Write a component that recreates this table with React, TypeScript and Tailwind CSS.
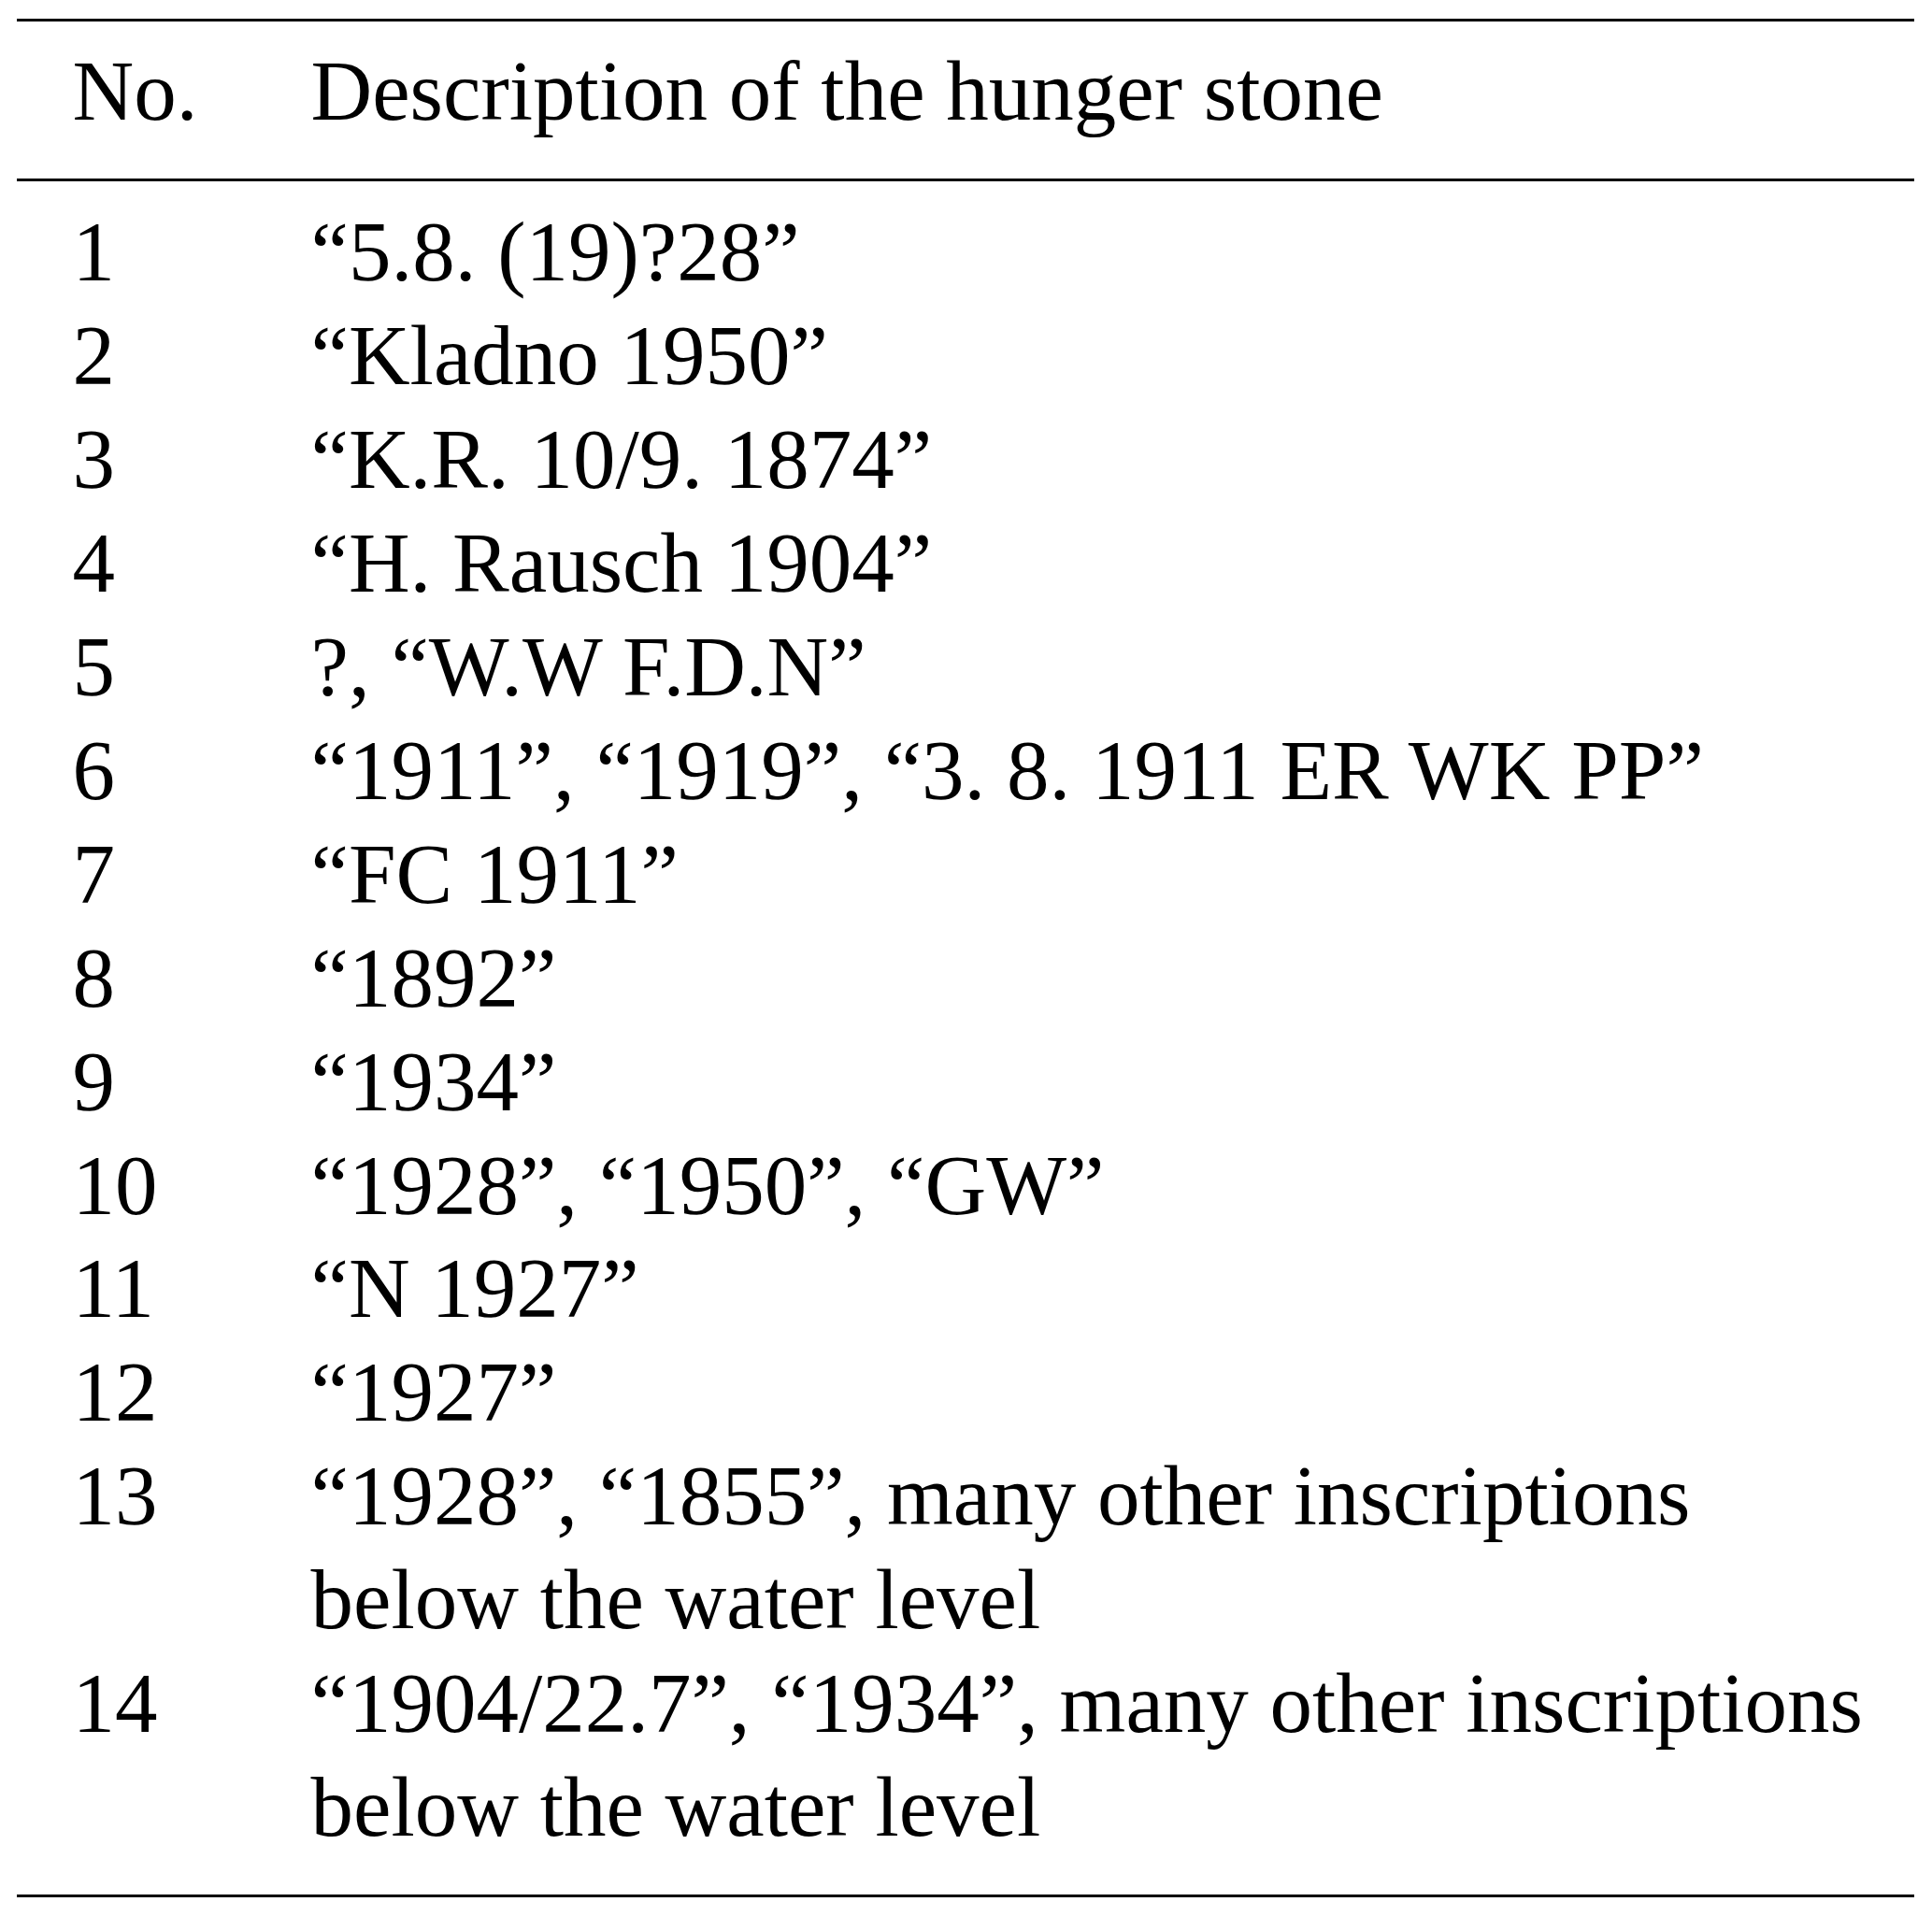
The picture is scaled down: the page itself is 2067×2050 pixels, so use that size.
const rows: { no: string; lines: string[] }[] = [
  { no: '1', lines: ['“5.8. (19)?28”'] },
  { no: '2', lines: ['“Kladno 1950”'] },
  { no: '3', lines: ['“K.R. 10/9. 1874”'] },
  { no: '4', lines: ['“H. Rausch 1904”'] },
  { no: '5', lines: ['?, “W.W F.D.N”'] },
  { no: '6', lines: ['“1911”, “1919”, “3. 8. 1911 ER WK PP”'] },
  { no: '7', lines: ['“FC 1911”'] },
  { no: '8', lines: ['“1892”'] },
  { no: '9', lines: ['“1934”'] },
  { no: '10', lines: ['“1928”, “1950”, “GW”'] },
  { no: '11', lines: ['“N 1927”'] },
  { no: '12', lines: ['“1927”'] },
  { no: '13', lines: ['“1928”, “1855”, many other inscriptions', 'below the water level'] },
  { no: '14', lines: ['“1904/22.7”, “1934”, many other inscriptions', 'below the water level'] },
];

function Rule({ className = '' }: { className?: string }) {
  return <div className={`h-[3px] bg-black ${className}`} />;
}

export default function App() {
  return (
    <div
      className="min-h-[2050px] w-[2067px] bg-white pl-[18px] pt-[20px] text-black"
      style={{ fontFamily: '"Liberation Serif", "Times New Roman", serif' }}
    >
      <div className="w-[2030px] text-[91px] leading-[110.9px]">
        <Rule />

        {/* Header */}
        <div className="mt-[20px] grid grid-cols-[255px_1fr] pl-[59.5px]">
          <div>No.</div>
          <div>Description of the hunger stone</div>
        </div>

        <Rule className="mt-[37px]" />

        {/* Body */}
        <div className="mt-[21.5px]">
          {rows.map(row => (
            <div key={row.no} className="grid grid-cols-[255px_1fr] pl-[59.5px]">
              <div>{row.no}</div>
              <div className="whitespace-nowrap">
                {row.lines.map((line, idx) => (
                  <div key={idx}>{line}</div>
                ))}
              </div>
            </div>
          ))}
        </div>

        <Rule className="mt-[37px]" />
      </div>
    </div>
  );
}
